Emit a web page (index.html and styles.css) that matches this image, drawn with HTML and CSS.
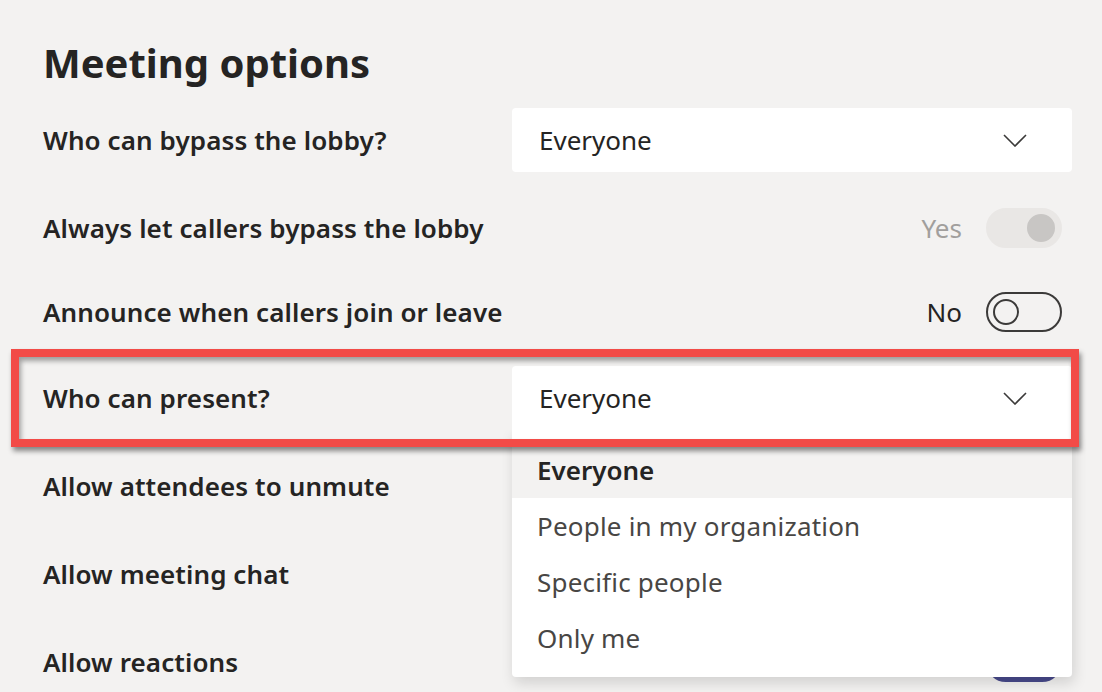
FILE: index.html
```html
<!DOCTYPE html>
<html lang="en">

<head>
    <meta name="viewport" content="width=device-width, initial-scale=1">
    <meta charset="UTF-8">
    <title>Meeting options</title>

    <link rel="stylesheet" href="styles.css">
</head>

<body>
    <main class="page">
        <h1 class="title">Meeting options</h1>

        <div class="option">
            <span class="label">Who can bypass the lobby?</span>
            <div class="select">
                <span>Everyone</span>
                <svg class="chevron" viewBox="0 0 24 13"><path d="M1 1l11 11L23 1" /></svg>
            </div>
        </div>

        <div class="option">
            <span class="label">Always let callers bypass the lobby</span>
            <div class="switch-wrap disabled">
                <span class="switch-text">Yes</span>
                <span class="switch on"><span class="knob"></span></span>
            </div>
        </div>

        <div class="option short">
            <span class="label">Announce when callers join or leave</span>
            <div class="switch-wrap">
                <span class="switch-text">No</span>
                <span class="switch"><span class="knob"></span></span>
            </div>
        </div>

        <div class="option highlighted">
            <span class="label">Who can present?</span>
            <div class="select open">
                <span>Everyone</span>
                <svg class="chevron" viewBox="0 0 24 13"><path d="M1 1l11 11L23 1" /></svg>

                <ul class="menu">
                    <li class="menu-item selected">Everyone</li>
                    <li class="menu-item">People in my organization</li>
                    <li class="menu-item">Specific people</li>
                    <li class="menu-item">Only me</li>
                </ul>
            </div>
            <div class="red-box"></div>
        </div>

        <div class="option">
            <span class="label">Allow attendees to unmute</span>
            <div class="switch-wrap">
                <span class="switch-text">Yes</span>
                <span class="switch checked"><span class="knob"></span></span>
            </div>
        </div>

        <div class="option">
            <span class="label">Allow meeting chat</span>
            <div class="switch-wrap">
                <span class="switch-text">Yes</span>
                <span class="switch checked"><span class="knob"></span></span>
            </div>
        </div>

        <div class="option">
            <span class="label">Allow reactions</span>
            <div class="switch-wrap">
                <span class="switch-text">Yes</span>
                <span class="switch checked"><span class="knob"></span></span>
            </div>
        </div>
    </main>
</body>

</html>
```

FILE: styles.css
```css
body {
    margin: 0;
    background: #f3f2f1;
    color: #252423;
    font-family: "Noto Sans", "Open Sans", sans-serif;
    overflow: hidden;
}

.page {
    padding: 0 30px 0 43px;
}

.title {
    margin: 0;
    height: 96px;
    padding-top: 43px;
    box-sizing: border-box;
    font-size: 40px;
    line-height: 1;
    font-weight: 700;
}

.option {
    position: relative;
    display: grid;
    grid-template-columns: 1fr 560px;
    align-items: center;
    height: 88px;
}

.option.short {
    height: 82px;
    padding-bottom: 3px;
    box-sizing: border-box;
}

.label {
    font-size: 26px;
    font-weight: 600;
    letter-spacing: 0.1px;
}

.select {
    position: relative;
    display: flex;
    align-items: center;
    justify-content: space-between;
    height: 64px;
    padding: 0 45px 0 27px;
    background: #fff;
    border-radius: 4px;
    font-size: 26px;
}

.select.open {
    border-radius: 4px 4px 0 0;
}

.chevron {
    width: 24px;
    height: 13px;
    fill: none;
    stroke: #3b3a39;
    stroke-width: 1.6;
}

.menu {
    position: absolute;
    z-index: 2;
    top: 100%;
    left: 0;
    right: 0;
    margin: 0;
    padding: 12px 0 11px;
    list-style: none;
    background: #fff;
    border-radius: 0 0 4px 4px;
    box-shadow: 2px 6px 14px rgba(0, 0, 0, 0.14);
    clip-path: inset(0 -30px -30px -30px);
}

.menu-item {
    height: 56px;
    line-height: 56px;
    padding-left: 25px;
    color: #484644;
    letter-spacing: 0.2px;
}

.menu-item.selected {
    background: #f3f2f1;
    color: #252423;
    font-weight: 600;
    letter-spacing: 0;
}

.red-box {
    position: absolute;
    z-index: 3;
    top: -5px;
    bottom: -5px;
    left: -32px;
    right: -7px;
    border: 8px solid #f24b47;
    box-shadow: 2px 4px 5px rgba(0, 0, 0, 0.45), inset 2px 4px 5px rgba(0, 0, 0, 0.35);
}

.switch-wrap {
    display: flex;
    align-items: center;
    justify-content: flex-end;
    gap: 24px;
    padding-right: 10px;
    font-size: 26px;
}

.switch {
    position: relative;
    box-sizing: border-box;
    width: 76px;
    height: 40px;
    border: 2px solid #3b3a39;
    border-radius: 20px;
}

.switch .knob {
    position: absolute;
    top: 5px;
    left: 5px;
    width: 26px;
    height: 26px;
    box-sizing: border-box;
    border: 2px solid #3b3a39;
    border-radius: 50%;
}

.switch.checked {
    background: #484a8c;
    border-color: #484a8c;
}

.switch.checked .knob {
    left: auto;
    right: 5px;
    background: #fff;
    border-color: #fff;
}

.disabled .switch-text {
    color: #a19f9d;
}

.disabled .switch {
    background: #e9e7e5;
    border-color: #e9e7e5;
}

.disabled .knob {
    left: auto;
    right: 5px;
    top: 4px;
    width: 28px;
    height: 28px;
    background: #c8c6c4;
    border-color: #c8c6c4;
}
```
